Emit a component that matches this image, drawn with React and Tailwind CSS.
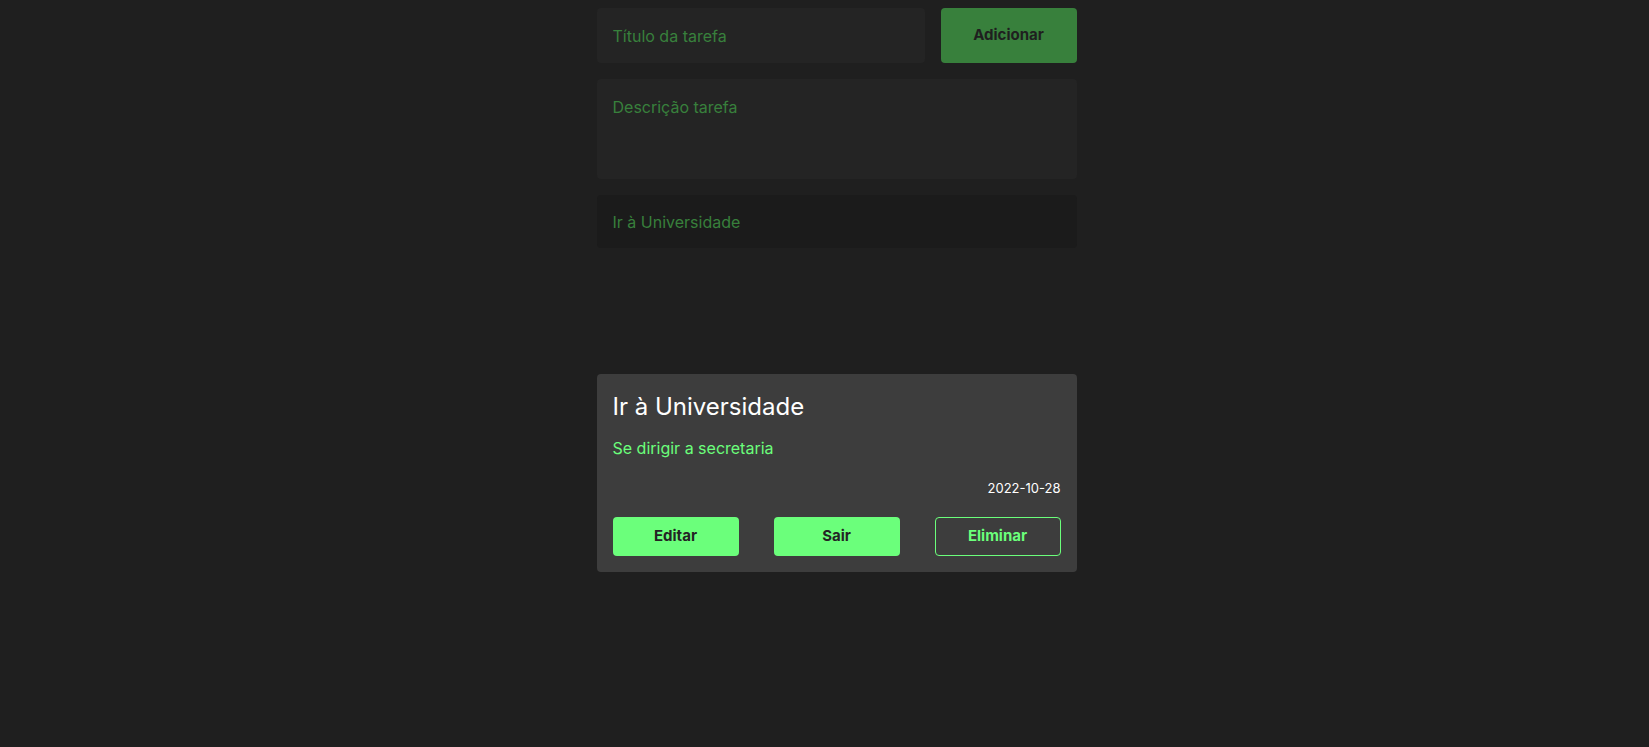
import React, { useState } from 'react';

const font = { fontFamily: 'Inter, "Noto Sans", sans-serif' };

const TaskCard = ({ title, description, date }) => (
  <div className="w-full rounded-[4px] bg-[#3d3d3d] px-4 pt-[17px] pb-4">
    <h2 className="text-[24px] leading-[32px] text-white">{title}</h2>
    <p className="mt-[13px] text-[16px] leading-6 text-[#6bff7b]">{description}</p>
    <div className="mt-[20px] text-right text-[13px] leading-4 text-white">{date}</div>
    <div className="mt-[21px] flex justify-between">
      <button className="h-[39px] w-[126px] rounded-[4px] bg-[#6bff7b] text-[15px] font-bold text-[#242424]">
        Editar
      </button>
      <button className="h-[39px] w-[126px] rounded-[4px] bg-[#6bff7b] text-[15px] font-bold text-[#242424]">
        Sair
      </button>
      <button className="h-[39px] w-[126px] rounded-[4px] border border-[#6bff7b] text-[15px] font-bold text-[#6bff7b]">
        Eliminar
      </button>
    </div>
  </div>
);

export default function App() {
  const [title, setTitle] = useState('');
  const [desc, setDesc] = useState('');

  return (
    <div className="min-h-[747px] bg-[#1f1f1f] pt-2" style={font}>
      <div className="mx-auto flex w-[480px] translate-x-[12px] flex-col">
        {/* form */}
        <div className="flex gap-4">
          <input
            value={title}
            onChange={(e) => setTitle(e.target.value)}
            placeholder="Título da tarefa"
            className="h-[55px] flex-1 rounded-[4px] bg-[#242424] px-4 text-[16px] text-[#38803c] outline-none placeholder:text-[#38803c]"
          />
          <button className="h-[55px] w-[136px] rounded-[4px] bg-[#38803c] text-[15px] font-bold text-[#1f1f1f]">
            Adicionar
          </button>
        </div>
        <textarea
          value={desc}
          onChange={(e) => setDesc(e.target.value)}
          placeholder="Descrição tarefa"
          className="mt-4 h-[100px] resize-none rounded-[4px] bg-[#242424] px-4 pt-[16px] text-[16px] text-[#38803c] outline-none placeholder:text-[#38803c]"
        />
        <div className="mt-4 flex h-[53px] items-center rounded-[4px] bg-[#1b1b1b] px-4 text-[16px] text-[#38803c]">
          Ir à Universidade
        </div>

        <div className="mt-[126px]">
          <TaskCard title="Ir à Universidade" description="Se dirigir a secretaria" date="2022-10-28" />
        </div>
      </div>
    </div>
  );
}
